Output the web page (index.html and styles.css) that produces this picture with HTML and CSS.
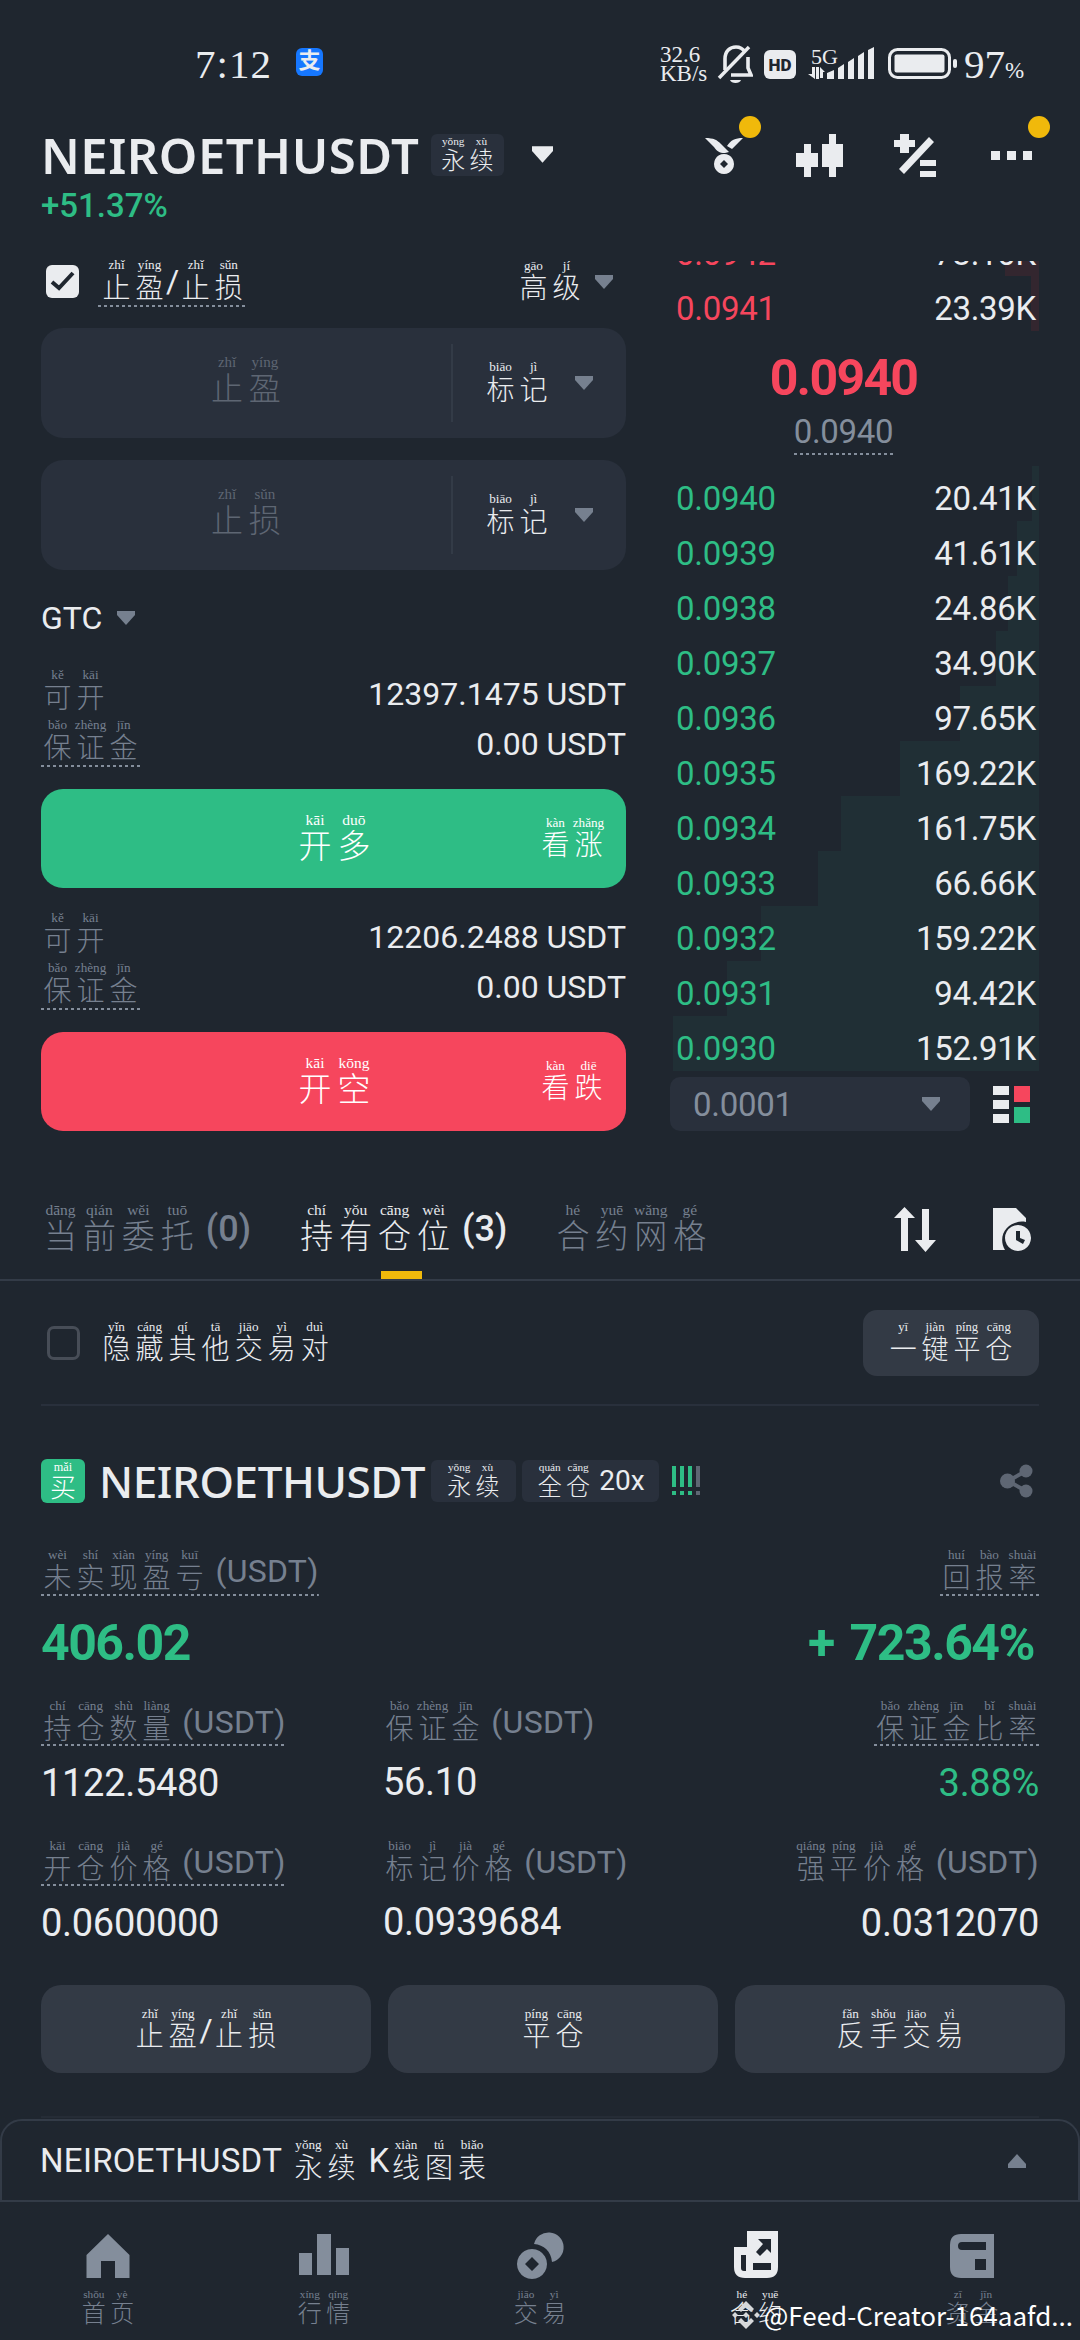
FILE: index.html
```html
<!DOCTYPE html>
<html lang="zh-CN">
<head>
    <meta charset="UTF-8">
    <meta name="viewport" content="width=device-width, initial-scale=1.0">
    <title>NEIROETHUSDT 永续</title>
    <link rel="stylesheet" href="styles.css">
</head>
<body>

    <div class="status">
        <span class="clock">7:12</span>
        <span class="alipay">支</span>
        <div class="speed">32.6<br>KB/s</div>
        <svg class="bell" width="36" height="40" viewBox="0 0 36 40" stroke="#eaecef" stroke-width="3.6">
            <path d="M8 26V15C8 7 13 3 19 3c4 0 7 2 9 5M31 13v11l3 7H14"/>
            <path d="M2 34L32 3" stroke-width="3.4"/>
            <path d="M13 36h11c-1 4-10 4-11 0z" fill="#eaecef" stroke="none"/>
        </svg>
        <span class="hd">HD</span>
        <div class="signal">
            <span>5G</span>
            <svg width="66" height="34" viewBox="0 0 66 34">
                <path d="M19 32v-6l7-3v9zM30 32V21l6-4v15zM40 32V15l6-4v21zM50 32V9l6-4v27zM60 32V3l6-3v32z"/>
                <path d="M0 27h4V20h3v12zM8 20h3v12H8zM12 20l5 5h-2v6h-3z"/>
            </svg>
        </div>
        <svg class="battery" width="70" height="32" viewBox="0 0 70 32">
            <rect x="1.5" y="1.5" width="60" height="28" rx="8" fill="none" stroke="#eaecef" stroke-width="3"/>
            <rect x="6.500" y="6.500" width="50" height="18" rx="2" fill="#eaecef"/>
            <rect x="65" y="11" width="4" height="9" rx="2" fill="#eaecef"/>
        </svg>
        <span class="percent">97<small>%</small></span>
    </div>

    <header class="header">
        <div class="pair">
            <h1>NEIROETHUSDT</h1>
            <span class="tag"><ruby>永<rt>yǒng</rt></ruby><ruby>续<rt>xù</rt></ruby></span>
            <svg class="caret" width="21" height="17" viewBox="0 0 18 14"><path d="M0 0h18v4l-9 10L0 4z"/></svg>
        </div>
        <div class="change">+51.37%</div>
        <div class="tools">
            <span class="tool">
                <svg width="48" height="48" viewBox="0 0 48 48">
                    <path d="M5 7c9 0 12 2 16 6l8 8-4 1c-6 0-8-2-11-6zM27 15c4-6 8-8 16-8L32 18z"/>
                    <path fill-rule="evenodd" d="M24 23a10 10 0 1 0 .01 0zM24 29l4 4-4 4-4-4z"/>
                </svg>
                <i class="dot"></i>
            </span>
            <span class="tool">
                <svg width="48" height="48" viewBox="0 0 48 48">
                    <path d="M8 13h7v9h7v14h-7v10H8V36H0V22h8zM33 3h7v10h7v23h-7v10h-7V36h-7V13h7z"/>
                </svg>
            </span>
            <span class="tool">
                <svg width="48" height="48" viewBox="0 0 48 48">
                    <path d="M8 3h9v6h6v7h-6v6H8v-6H2V9h6zM37 6l5 5L12 43l-5-5zM28 29h16v6H28zM28 40h16v6H28z"/>
                </svg>
            </span>
            <span class="tool">
                <svg width="48" height="48" viewBox="0 0 48 48">
                    <path d="M3 20h9v9H3zM19 20h9v9h-9zM35 20h9v9h-9z"/>
                </svg>
                <i class="dot dot-more"></i>
            </span>
        </div>
    </header>

    <main class="trade">
        <section class="order-form">
            <div class="tpsl">
                <svg width="33" height="33" viewBox="0 0 33 33">
                    <rect width="33" height="33" rx="6" fill="#eaecef"/>
                    <path d="M6 17l7 6L27 8" fill="none" stroke="#1f262f" stroke-width="4"/>
                </svg>
                <span class="hint"><ruby>止<rt>zhǐ</rt></ruby><ruby>盈<rt>yíng</rt></ruby>/<ruby>止<rt>zhǐ</rt></ruby><ruby>损<rt>sǔn</rt></ruby></span>
                <span class="advanced"><ruby>高<rt>gāo</rt></ruby><ruby>级<rt>jí</rt></ruby></span>
                <svg class="caret grey" width="18" height="14" viewBox="0 0 18 14"><path d="M0 0h18v4l-9 10L0 4z"/></svg>
            </div>

            <div class="field">
                <div class="placeholder"><ruby>止<rt>zhǐ</rt></ruby><ruby>盈<rt>yíng</rt></ruby></div>
                <div class="trigger">
                    <span><ruby>标<rt>biāo</rt></ruby><ruby>记<rt>jì</rt></ruby></span>
                    <svg class="caret grey" width="18" height="14" viewBox="0 0 18 14"><path d="M0 0h18v4l-9 10L0 4z"/></svg>
                </div>
            </div>
            <div class="field">
                <div class="placeholder"><ruby>止<rt>zhǐ</rt></ruby><ruby>损<rt>sǔn</rt></ruby></div>
                <div class="trigger">
                    <span><ruby>标<rt>biāo</rt></ruby><ruby>记<rt>jì</rt></ruby></span>
                    <svg class="caret grey" width="18" height="14" viewBox="0 0 18 14"><path d="M0 0h18v4l-9 10L0 4z"/></svg>
                </div>
            </div>

            <div class="tif">
                <span>GTC</span>
                <svg class="caret grey" width="18" height="14" viewBox="0 0 18 14"><path d="M0 0h18v4l-9 10L0 4z"/></svg>
            </div>

            <div class="avail first">
                <span class="name"><ruby>可<rt>kě</rt></ruby><ruby>开<rt>kāi</rt></ruby></span>
                <span>12397.1475 USDT</span>
            </div>
            <div class="avail">
                <span class="name hint"><ruby>保<rt>bǎo</rt></ruby><ruby>证<rt>zhèng</rt></ruby><ruby>金<rt>jīn</rt></ruby></span>
                <span>0.00 USDT</span>
            </div>
            <button class="order long">
                <span class="main"><ruby>开<rt>kāi</rt></ruby><ruby>多<rt>duō</rt></ruby></span>
                <span class="side"><ruby>看<rt>kàn</rt></ruby><ruby>涨<rt>zhǎng</rt></ruby></span>
            </button>

            <div class="avail second">
                <span class="name"><ruby>可<rt>kě</rt></ruby><ruby>开<rt>kāi</rt></ruby></span>
                <span>12206.2488 USDT</span>
            </div>
            <div class="avail">
                <span class="name hint"><ruby>保<rt>bǎo</rt></ruby><ruby>证<rt>zhèng</rt></ruby><ruby>金<rt>jīn</rt></ruby></span>
                <span>0.00 USDT</span>
            </div>
            <button class="order short">
                <span class="main"><ruby>开<rt>kāi</rt></ruby><ruby>空<rt>kōng</rt></ruby></span>
                <span class="side"><ruby>看<rt>kàn</rt></ruby><ruby>跌<rt>diē</rt></ruby></span>
            </button>
        </section>

        <section class="book">
            <div class="asks">
                <div class="level" style="--depth: 34px"><b>0.0942</b><span>73.10K</span></div>
                <div class="level" style="--depth: 8px"><b>0.0941</b><span>23.39K</span></div>
            </div>
            <div class="last">
                <strong>0.0940</strong>
                <span class="hint">0.0940</span>
            </div>
            <div class="bids">
                <div class="level" style="--depth: 7px"><b>0.0940</b><span>20.41K</span></div>
                <div class="level" style="--depth: 22px"><b>0.0939</b><span>41.61K</span></div>
                <div class="level" style="--depth: 31px"><b>0.0938</b><span>24.86K</span></div>
                <div class="level" style="--depth: 43px"><b>0.0937</b><span>34.90K</span></div>
                <div class="level" style="--depth: 79px"><b>0.0936</b><span>97.65K</span></div>
                <div class="level" style="--depth: 139px"><b>0.0935</b><span>169.22K</span></div>
                <div class="level" style="--depth: 198px"><b>0.0934</b><span>161.75K</span></div>
                <div class="level" style="--depth: 221px"><b>0.0933</b><span>66.66K</span></div>
                <div class="level" style="--depth: 278px"><b>0.0932</b><span>159.22K</span></div>
                <div class="level" style="--depth: 312px"><b>0.0931</b><span>94.42K</span></div>
                <div class="level" style="--depth: 366px"><b>0.0930</b><span>152.91K</span></div>
            </div>
            <div class="book-foot">
                <div class="step">
                    <span>0.0001</span>
                    <svg class="caret grey" width="18" height="14" viewBox="0 0 18 14"><path d="M0 0h18v4l-9 10L0 4z"/></svg>
                </div>
                <svg width="37" height="37" viewBox="0 0 37 37">
                    <path fill="#eaecef" d="M0 0h16v9H0zM0 14h16v9H0zM0 28h16v9H0z"/>
                    <path fill="#f6465d" d="M21 0h16v16H21z"/>
                    <path fill="#2ebd85" d="M21 21h16v16H21z"/>
                </svg>
            </div>
        </section>
    </main>

    <nav class="tabs">
        <span class="tab"><ruby>当<rt>dāng</rt></ruby><ruby>前<rt>qián</rt></ruby><ruby>委<rt>wěi</rt></ruby><ruby>托<rt>tuō</rt></ruby> (0)</span>
        <span class="tab active"><ruby>持<rt>chí</rt></ruby><ruby>有<rt>yǒu</rt></ruby><ruby>仓<rt>cāng</rt></ruby><ruby>位<rt>wèi</rt></ruby> (3)</span>
        <span class="tab"><ruby>合<rt>hé</rt></ruby><ruby>约<rt>yuē</rt></ruby><ruby>网<rt>wǎng</rt></ruby><ruby>格<rt>gé</rt></ruby></span>
        <svg class="sort" width="42" height="45" viewBox="0 0 42 45">
            <path d="M10.500 0L21 11h-7v33H7V11H0zM28 2h7v31h7L31.500 45 21 33h7z"/>
        </svg>
        <svg width="38" height="43" viewBox="0 0 38 43">
            <path d="M0 0h23l10 10v4C17 11 3 26 12 42H0z"/>
            <path fill-rule="evenodd" d="M25 17a13 13 0 1 0 .01 0zM23 23h4v7l5 2-2 4-7-4z"/>
        </svg>
    </nav>

    <div class="filter">
        <i class="box"></i>
        <span class="filter-name"><ruby>隐<rt>yǐn</rt></ruby><ruby>藏<rt>cáng</rt></ruby><ruby>其<rt>qí</rt></ruby><ruby>他<rt>tā</rt></ruby><ruby>交<rt>jiāo</rt></ruby><ruby>易<rt>yì</rt></ruby><ruby>对<rt>duì</rt></ruby></span>
        <button class="close-all"><ruby>一<rt>yī</rt></ruby><ruby>键<rt>jiàn</rt></ruby><ruby>平<rt>píng</rt></ruby><ruby>仓<rt>cāng</rt></ruby></button>
    </div>

    <section class="position">
        <div class="position-head">
            <span class="buy"><ruby>买<rt>mǎi</rt></ruby></span>
            <h2>NEIROETHUSDT</h2>
            <span class="tag"><ruby>永<rt>yǒng</rt></ruby><ruby>续<rt>xù</rt></ruby></span>
            <span class="tag leverage"><ruby>全<rt>quán</rt></ruby><ruby>仓<rt>cāng</rt></ruby> 20x</span>
            <svg width="30" height="30" viewBox="0 0 30 30">
                <path fill="#2ebd85" d="M0 0h4v21H0zM0 25h4v4H0zM8 0h4v21H8zM8 25h4v4H8zM16 0h4v21h-4zM16 25h4v4h-4z"/>
                <path fill="#5e6673" d="M24 0h4v21h-4zM24 25h4v4h-4z"/>
            </svg>
            <svg class="share" width="33" height="34" viewBox="0 0 33 34">
                <path d="M26 7L8 17l18 10" fill="none" stroke="#5e6673" stroke-width="4"/>
                <circle cx="7.500" cy="17" r="7.500"/><circle cx="26" cy="7" r="6.500"/><circle cx="26" cy="27" r="6.500"/>
            </svg>
        </div>

        <div class="pnl">
            <div class="stat">
                <span class="label hint"><ruby>未<rt>wèi</rt></ruby><ruby>实<rt>shí</rt></ruby><ruby>现<rt>xiàn</rt></ruby><ruby>盈<rt>yíng</rt></ruby><ruby>亏<rt>kuī</rt></ruby> (USDT)</span>
                <span class="big">406.02</span>
            </div>
            <div class="stat">
                <span class="label hint"><ruby>回<rt>huí</rt></ruby><ruby>报<rt>bào</rt></ruby><ruby>率<rt>shuài</rt></ruby></span>
                <span class="big roi">+ 723.64%</span>
            </div>
        </div>

        <div class="stats">
            <div class="stat">
                <span class="label hint"><ruby>持<rt>chí</rt></ruby><ruby>仓<rt>cāng</rt></ruby><ruby>数<rt>shù</rt></ruby><ruby>量<rt>liàng</rt></ruby> (USDT)</span>
                <span class="value">1122.5480</span>
            </div>
            <div class="stat">
                <span class="label"><ruby>保<rt>bǎo</rt></ruby><ruby>证<rt>zhèng</rt></ruby><ruby>金<rt>jīn</rt></ruby> (USDT)</span>
                <span class="value">56.10</span>
            </div>
            <div class="stat">
                <span class="label hint"><ruby>保<rt>bǎo</rt></ruby><ruby>证<rt>zhèng</rt></ruby><ruby>金<rt>jīn</rt></ruby><ruby>比<rt>bǐ</rt></ruby><ruby>率<rt>shuài</rt></ruby></span>
                <span class="value up">3.88%</span>
            </div>
            <div class="stat">
                <span class="label hint"><ruby>开<rt>kāi</rt></ruby><ruby>仓<rt>cāng</rt></ruby><ruby>价<rt>jià</rt></ruby><ruby>格<rt>gé</rt></ruby> (USDT)</span>
                <span class="value">0.0600000</span>
            </div>
            <div class="stat">
                <span class="label"><ruby>标<rt>biāo</rt></ruby><ruby>记<rt>jì</rt></ruby><ruby>价<rt>jià</rt></ruby><ruby>格<rt>gé</rt></ruby> (USDT)</span>
                <span class="value">0.0939684</span>
            </div>
            <div class="stat">
                <span class="label"><ruby>强<rt>qiáng</rt></ruby><ruby>平<rt>píng</rt></ruby><ruby>价<rt>jià</rt></ruby><ruby>格<rt>gé</rt></ruby> (USDT)</span>
                <span class="value">0.0312070</span>
            </div>
        </div>

        <div class="actions">
            <button><ruby>止<rt>zhǐ</rt></ruby><ruby>盈<rt>yíng</rt></ruby>/<ruby>止<rt>zhǐ</rt></ruby><ruby>损<rt>sǔn</rt></ruby></button>
            <button><ruby>平<rt>píng</rt></ruby><ruby>仓<rt>cāng</rt></ruby></button>
            <button><ruby>反<rt>fǎn</rt></ruby><ruby>手<rt>shǒu</rt></ruby><ruby>交<rt>jiāo</rt></ruby><ruby>易<rt>yì</rt></ruby></button>
        </div>
    </section>

    <div class="chart-bar">
        <span>NEIROETHUSDT <ruby>永<rt>yǒng</rt></ruby><ruby>续<rt>xù</rt></ruby> K<ruby>线<rt>xiàn</rt></ruby><ruby>图<rt>tú</rt></ruby><ruby>表<rt>biǎo</rt></ruby></span>
        <svg class="caret grey" width="18" height="14" viewBox="0 0 18 14"><path d="M9 0l9 10v4H0v-4z"/></svg>
    </div>

    <footer class="bottom-nav">
        <div class="item">
            <svg width="50" height="50" viewBox="0 0 50 50"><path d="M25 3l21.500 21v23H32V30H18v17H3.500V24z"/></svg>
            <span><ruby>首<rt>shǒu</rt></ruby><ruby>页<rt>yè</rt></ruby></span>
        </div>
        <div class="item">
            <svg width="50" height="50" viewBox="0 0 50 50"><path d="M0 22h13v22H0zM18 3h14v41H18zM37 17h13v27H37z"/></svg>
            <span><ruby>行<rt>xíng</rt></ruby><ruby>情<rt>qíng</rt></ruby></span>
        </div>
        <div class="item">
            <svg width="50" height="50" viewBox="0 0 50 50">
                <path fill-rule="evenodd" d="M17 18a15 15 0 1 0 .01 0zM17 26l7 7-7 7-7-7z"/>
                <path d="M19 13A15 15 0 1 1 37 31C36 20 29 14 19 13z"/>
            </svg>
            <span><ruby>交<rt>jiāo</rt></ruby><ruby>易<rt>yì</rt></ruby></span>
        </div>
        <div class="item on">
            <svg width="50" height="50" viewBox="0 0 50 50">
                <path fill-rule="evenodd" d="M16 0h31v36q0 11-11 11H14Q3 47 3 36V16h13zM27 8h13v14l-4-4-7 7-4-4 7-8zM10 24v13q0 3 3 3h2V24zM22 32h18v7H22z"/>
            </svg>
            <span><ruby>合<rt>hé</rt></ruby><ruby>约<rt>yuē</rt></ruby></span>
        </div>
        <div class="item">
            <svg width="50" height="50" viewBox="0 0 50 50">
                <path fill-rule="evenodd" d="M14 3h33v44H14Q3 47 3 36V14Q3 3 14 3zM15 11a4 4 0 0 0 0 8h24v-8zM28 28v11h11V28z"/>
            </svg>
            <span><ruby>资<rt>zī</rt></ruby><ruby>金<rt>jīn</rt></ruby></span>
        </div>
        <div class="watermark">
            <svg width="28" height="28" viewBox="0 0 28 28">
                <path d="M14 0l8 8-3 3-5-5-5 5-3-3zM14 28l-8-8 3-3 5 5 5-5 3 3zM14 11l3 3-3 3-3-3zM3 11l3 3-3 3-3-3zM25 11l3 3-3 3-3-3z"/>
            </svg>
            <span>@Feed-Creator-164aafd...</span>
        </div>
    </footer>

</body>
</html>
```
FILE: styles.css
```css
* {
    box-sizing: border-box;
}

body {
    margin: 0;
    width: 1080px;
    height: 2340px;
    overflow: hidden;
    background-color: #1f262f;
    color: #eaecef;
    font-family: Roboto, "Noto Sans CJK SC", sans-serif;
    font-size: 32px;
}

svg {
    display: block;
    flex: none;
    fill: #eaecef;
}

h1,
h2 {
    margin: 0;
    font-family: "Noto Sans", sans-serif;
}

button {
    border: none;
    padding: 0;
    color: #eaecef;
    font: inherit;
}

/* pinyin above each character */
ruby {
    display: inline-block;
    position: relative;
    width: 1.18em;
    font-family: "Noto Sans CJK SC", sans-serif;
    font-weight: 300;
    font-size: 28px;
    line-height: 1;
    letter-spacing: 0;
    text-align: center;
    vertical-align: -0.2em;
}

rt {
    display: block;
    position: absolute;
    bottom: 100%;
    left: 50%;
    transform: translateX(-50%);
    font-family: "Liberation Serif", serif;
    font-size: 0.47em;
    font-weight: 400;
    line-height: 1;
    white-space: nowrap;
}

.hint {
    background: repeating-linear-gradient(90deg, #848e9c 0 3px, transparent 3px 6px) bottom / 100% 2px no-repeat;
}

.grey {
    fill: #76808f;
}

/* status bar */
.status {
    display: flex;
    align-items: center;
    height: 110px;
    padding: 18px 54px 0 195px;
}

.clock {
    width: 101px;
    font-family: "Liberation Serif", serif;
    font-size: 41px;
    letter-spacing: 1px;
}

.alipay {
    width: 27px;
    height: 28px;
    margin-top: -4px;
    border-radius: 6px;
    background-color: #1677ff;
    font-size: 22px;
    font-weight: 700;
    line-height: 26px;
    text-align: center;
}

.speed {
    margin-left: auto;
    width: 57px;
    font-family: "Liberation Serif", serif;
    font-size: 23px;
    line-height: 19px;
}

.bell {
    margin-right: 11px;
    fill: none;
}

.hd {
    width: 32px;
    height: 29px;
    margin-right: 12px;
    border-radius: 6px;
    background-color: #eaecef;
    color: #1f262f;
    font-size: 17px;
    font-weight: 900;
    line-height: 30px;
    text-align: center;
}

.signal {
    position: relative;
    margin-right: 14px;
}

.signal span {
    position: absolute;
    left: 3px;
    top: -1px;
    font-family: "Liberation Serif", serif;
    font-size: 22px;
    line-height: 22px;
}

.battery {
    margin-right: 6px;
}

.percent {
    width: 62px;
    font-family: "Liberation Serif", serif;
    font-size: 41px;
    white-space: nowrap;
}

.percent small {
    font-size: 23px;
}

/* pair header */
.header {
    display: grid;
    grid-template-columns: 1fr auto;
    grid-template-rows: 62px 42px;
    height: 151px;
    padding: 14px 44px 0 41px;
}

.pair {
    display: flex;
    align-items: center;
}

.pair h1 {
    width: 390px;
    font-size: 49px;
    font-weight: 600;
    line-height: 62px;
    letter-spacing: 0.5px;
}

.tag {
    height: 42px;
    padding: 0 8px;
    border-radius: 6px;
    background-color: #29303c;
    font-size: 28px;
    line-height: 42px;
    white-space: nowrap;
}

.tag ruby {
    font-size: 24px;
}

.pair .caret {
    margin: 0 0 2px 28px;
}

.change {
    grid-row: 2;
    color: #2ebd85;
    font-size: 33px;
    font-weight: 500;
    line-height: 40px;
}

.tools {
    display: flex;
    align-items: center;
    gap: 48px;
}

.tool {
    position: relative;
}

.dot {
    position: absolute;
    top: -15px;
    right: -13px;
    width: 22px;
    height: 22px;
    border-radius: 50%;
    background-color: #f0b90b;
}

.dot-more {
    right: -14px;
}

/* order form + order book */
.trade {
    display: grid;
    grid-template-columns: 585px 369px;
    column-gap: 44px;
    height: 871px;
    padding-left: 41px;
}

.tpsl {
    display: flex;
    align-items: center;
    height: 41px;
    margin-bottom: 26px;
    padding: 0 13px 0 5px;
}

.tpsl .hint {
    height: 46px;
    margin: 5px 0 0 19px;
    padding-left: 2px;
    line-height: 41px;
}

.advanced {
    margin-left: auto;
    margin-right: 12px;
}

.field {
    display: flex;
    align-items: center;
    height: 110px;
    margin-bottom: 22px;
    border-radius: 22px;
    background-color: #29303c;
}

.placeholder {
    width: 410px;
    text-align: center;
    color: #5e6673;
}

.placeholder ruby {
    font-size: 32px;
}

.trigger {
    display: flex;
    align-items: center;
    justify-content: space-between;
    width: 142px;
    height: 78px;
    padding-left: 31px;
    border-left: 2px solid #333b47;
}

.tif {
    display: flex;
    align-items: center;
    gap: 15px;
    height: 43px;
    margin-top: 26px;
}

.avail {
    display: flex;
    justify-content: space-between;
    height: 50px;
    line-height: 50px;
}

.avail.first {
    margin-top: 30px;
}

.avail.second {
    margin-top: 24px;
}

.name {
    height: 48px;
    color: #76808f;
    line-height: 44px;
}

.order {
    display: flex;
    align-items: center;
    width: 585px;
    height: 99px;
    margin-top: 20px;
    border-radius: 22px;
    color: #fff;
}

.long {
    background-color: #2ebd85;
}

.short {
    background-color: #f6465d;
}

.main {
    flex: 1;
    padding: 5px 0 0 89px;
}

.main ruby {
    font-size: 33px;
}

.side {
    padding-right: 21px;
}

.book {
    overflow: hidden;
    font-size: 33px;
    letter-spacing: -0.3px;
}

.asks {
    margin-top: -40px;
}

.level {
    display: flex;
    justify-content: space-between;
    height: 55px;
    padding: 10px 3px 0 6px;
    line-height: 46px;
    background-repeat: no-repeat;
    background-position: right top;
    background-size: var(--depth) 100%;
}

.level b {
    font-weight: 400;
}

.asks .level {
    background-image: linear-gradient(#33262f, #33262f);
}

.bids .level {
    background-image: linear-gradient(#202f35, #202f35);
}

.asks b {
    color: #f6465d;
}

.bids b {
    color: #2ebd85;
}

.last {
    display: flex;
    flex-direction: column;
    align-items: center;
    height: 135px;
    padding: 17px 22px 0 0;
    color: #848e9c;
}

.last strong {
    color: #f6465d;
    font-size: 50px;
    font-weight: 700;
    line-height: 60px;
    letter-spacing: -1.7px;
}

.last .hint {
    height: 45px;
    margin-top: 2px;
    line-height: 44px;
}

.book-foot {
    display: flex;
    align-items: center;
    gap: 23px;
    margin-top: 6px;
}

.step {
    display: flex;
    align-items: center;
    justify-content: space-between;
    width: 300px;
    height: 54px;
    padding: 0 30px 0 23px;
    border-radius: 10px;
    background-color: #29303c;
    color: #848e9c;
}

/* tabs */
.tabs {
    display: flex;
    align-items: center;
    height: 149px;
    padding: 48px 49px 0 41px;
    border-bottom: 2px solid #333b47;
    color: #76808f;
    font-size: 36px;
    font-weight: 500;
}

.tabs ruby {
    font-size: 33px;
}

.tab {
    position: relative;
    margin-right: 46px;
    line-height: 99px;
    white-space: nowrap;
}

.tab.active {
    color: #eaecef;
}

.tab.active::after {
    content: "";
    position: absolute;
    left: 50%;
    bottom: 0;
    width: 41px;
    height: 8px;
    margin-left: -21px;
    background-color: #f0b90b;
}

.sort {
    margin: 0 57px 0 auto;
}

.filter {
    display: flex;
    align-items: center;
    height: 125px;
    margin: 0 41px;
    border-bottom: 2px solid #29303c;
}

.box {
    width: 33px;
    height: 34px;
    margin-left: 6px;
    border: 3px solid #474d57;
    border-radius: 7px;
}

.filter-name {
    margin-left: 20px;
}

.close-all {
    width: 176px;
    height: 66px;
    margin-left: auto;
    border-radius: 14px;
    background-color: #333a45;
}

.close-all ruby {
    font-size: 27px;
}

/* open position */
.position {
    padding: 48px 41px 0;
}

.position-head {
    display: flex;
    align-items: center;
    height: 54px;
}

.position-head h2 {
    width: 332px;
    margin-left: 14px;
    font-size: 44px;
    font-weight: 500;
    line-height: 54px;
    letter-spacing: -0.4px;
}

.position-head .tag {
    padding: 0 14px;
}

.position-head .leverage {
    margin: 0 13px 0 6px;
}

.buy {
    width: 44px;
    height: 44px;
    border-radius: 6px;
    background-color: #2ebd85;
    color: #fff;
    line-height: 44px;
    text-align: center;
}

.buy ruby {
    font-size: 26px;
}

.share {
    margin-left: auto;
    margin-right: 6px;
    fill: #5e6673;
}

.pnl {
    display: flex;
    justify-content: space-between;
    margin-top: 42px;
}

.stat {
    display: flex;
    flex-direction: column;
    align-items: flex-start;
}

.label {
    height: 46px;
    color: #76808f;
    line-height: 42px;
    letter-spacing: 0.3px;
    white-space: nowrap;
    word-spacing: 1px;
}

.big {
    margin-top: 17px;
    color: #2ebd85;
    font-size: 50px;
    font-weight: 700;
    line-height: 60px;
    letter-spacing: -1.5px;
}

.roi {
    padding-right: 5px;
    word-spacing: 5px;
}

.stats {
    display: grid;
    grid-template-columns: 342px 1fr auto;
    row-gap: 38px;
    margin-top: 28px;
}

.value {
    margin-top: 17px;
    font-size: 38px;
    line-height: 40px;
    letter-spacing: -0.3px;
}

.stats .stat {
    height: 102px;
}

.stats .stat:nth-child(3n + 2) .value {
    margin-top: 15px;
}

.stats .stat:nth-child(3n),
.pnl .stat:last-child {
    align-items: flex-end;
}

.up {
    color: #2ebd85;
}

.actions {
    display: grid;
    grid-template-columns: repeat(3, 330px);
    column-gap: 17px;
    margin-top: 42px;
    padding-bottom: 43px;
    border-bottom: 2px solid #252c36;
}

.actions button {
    height: 88px;
    padding-top: 1px;
    border-radius: 20px;
    background-color: #333a45;
}

.chart-bar {
    display: flex;
    align-items: center;
    justify-content: space-between;
    height: 83px;
    margin-top: 1px;
    padding: 0 52px 0 38px;
    border: 2px solid #333b47;
    border-radius: 22px 22px 0 0;
    font-size: 33px;
    letter-spacing: 0.3px;
    word-spacing: 2px;
}

.bottom-nav {
    position: relative;
    display: grid;
    grid-template-columns: repeat(5, 1fr);
    padding-top: 29px;
}

.item {
    display: flex;
    flex-direction: column;
    align-items: center;
    color: #76808f;
}

.item svg {
    fill: #848e9c;
}

.item span {
    margin-top: 3px;
    line-height: 44px;
}

.item ruby {
    font-size: 24px;
}

.item.on {
    color: #eaecef;
}

.item.on svg {
    fill: #eaecef;
}

.watermark {
    position: absolute;
    top: 91px;
    right: 7px;
    display: flex;
    align-items: center;
    gap: 4px;
    color: #fff;
    font-family: "Noto Sans CJK SC", sans-serif;
    font-size: 26px;
    line-height: 44px;
}

.watermark svg {
    fill: #d6d8da;
}
```
